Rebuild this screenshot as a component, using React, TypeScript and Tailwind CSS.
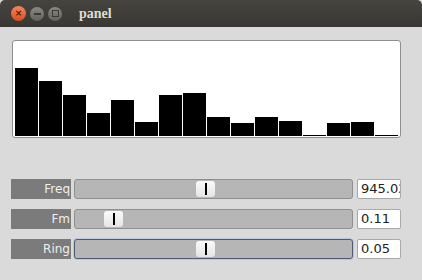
import React from "react";

const bars = [68, 55, 41, 23, 36, 14, 41, 43, 19, 13, 19, 15, 1, 13, 14, 1];

const sliders = [
  { label: "Freq", value: "945.02", pos: 121, focused: false },
  { label: "Fm", value: "0.11", pos: 29, focused: false },
  { label: "Ring", value: "0.05", pos: 121, focused: true },
];

function TitleBar() {
  return (
    <div className="flex h-[27px] items-center rounded-t-[5px] bg-gradient-to-b from-[#45443f] to-[#383733] pl-[11px]">
      <div className="flex items-center gap-[4px]">
        <span className="flex size-[15px] items-center justify-center rounded-full bg-gradient-to-b from-[#f5845a] to-[#de4b1f] text-[9px] font-bold leading-none text-[#4a1a0a]">
          ×
        </span>
        <span className="flex size-[14px] items-center justify-center rounded-full bg-gradient-to-b from-[#8a8984] to-[#62615c]">
          <span className="h-[2px] w-[7px] bg-[#3a3935]" />
        </span>
        <span className="flex size-[14px] items-center justify-center rounded-full bg-gradient-to-b from-[#8a8984] to-[#62615c]">
          <span className="size-[7px] border border-[#3a3935]" />
        </span>
      </div>
      <span className="ml-[17px] font-['Liberation_Serif',serif] text-[14px] font-bold text-[#dfdbd2]">
        panel
      </span>
    </div>
  );
}

function Chart() {
  return (
    <div className="ml-[12px] mt-[13px] flex h-[98px] w-[389px] items-end gap-[1px] rounded-[3px] border border-[#8e8e8e] bg-white pb-[1px] pl-[2px]">
      {bars.map((h, i) => (
        <div key={i} className="w-[23px] bg-black" style={{ height: h }} />
      ))}
    </div>
  );
}

function SliderRow({ label, value, pos, focused }: (typeof sliders)[number]) {
  return (
    <div className="flex h-[20px] items-stretch">
      <div className="flex w-[60px] items-center justify-end bg-[#7b7b7b] pr-[1px] text-[12px] text-[#eeeeee]">
        {label}
      </div>
      <div
        className={
          "relative ml-[3px] w-[279px] rounded-[3px] border bg-[#b6b6b6] " +
          (focused
            ? "border-[#4d5b73] shadow-[0_0_0_1px_#b9c8dc]"
            : "border-[#8f8f8f]")
        }
      >
        <div
          className="absolute top-[1px] flex h-[16px] w-[19px] items-center justify-center rounded-[3px] bg-gradient-to-b from-[#fbfbfb] to-[#e4e4e4]"
          style={{ left: pos }}
        >
          <span className="h-[12px] w-[2px] bg-black" />
        </div>
      </div>
      <div className="ml-[4px] flex w-[44px] items-center overflow-hidden rounded-[2px] border border-[#a9a9a9] bg-white pl-[3px] text-[13px] whitespace-nowrap text-[#222]">
        {value}
      </div>
    </div>
  );
}

export default function App() {
  return (
    <div className="h-[280px] w-[422px] overflow-hidden bg-[#dadada] font-['DejaVu_Sans',sans-serif]">
      <TitleBar />
      <Chart />
      <div className="ml-[11px] mt-[41px] flex flex-col gap-[10px]">
        {sliders.map((s) => (
          <SliderRow key={s.label} {...s} />
        ))}
      </div>
    </div>
  );
}
